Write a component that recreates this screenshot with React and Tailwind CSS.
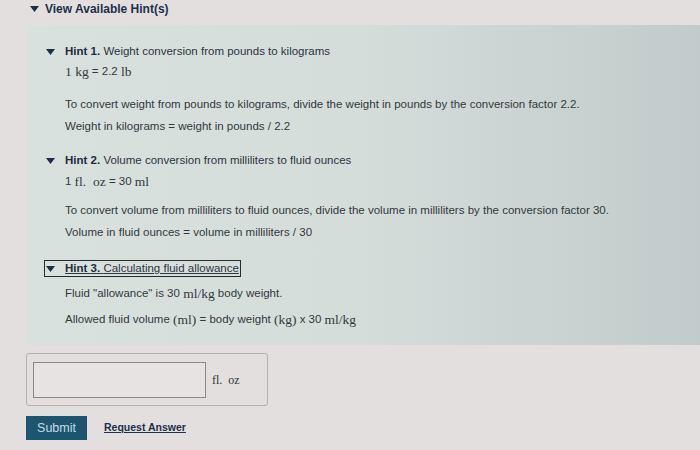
import React from "react";

const sans = { fontFamily: '"Liberation Sans", Arial, sans-serif' };

const Caret = () => (
  <svg width="9" height="6" viewBox="0 0 9 6" className="shrink-0">
    <path d="M0 0 L9 0 L4.5 6 Z" fill="#1d2f45" />
  </svg>
);

const Serif = ({ children }) => (
  <span className="font-['Liberation_Serif',serif] text-[13.5px]">{children}</span>
);

const HintHead = ({ n, title, focused }) => (
  <div
    className={`flex items-center h-[17px] ml-[17px] w-fit pr-[1px] ${
      focused ? "border-[1.5px] border-[#2a2a2a]" : "border-[1.5px] border-transparent"
    }`}>
    <span className="ml-[1px] w-[19px] flex">
      <Caret />
    </span>
    <span className={`text-[11.5px] text-[#2d3440] ${focused ? "underline" : ""}`}>
      <b className="text-[#1d2b3c]">Hint {n}.</b> {title}
    </span>
  </div>
);

const Line = ({ children, className = "" }) => (
  <div className={`h-[22px] flex items-center pl-[38px] text-[11.5px] text-[#33383d] ${className}`}>
    {children}
  </div>
);

export default function App() {
  return (
    <div
      style={sans}
      className="w-[700px] h-[450px] overflow-hidden bg-[#e4dfdf] text-[#333]">
      <div className="flex items-center h-[18px] pl-[30px] gap-[6px]">
        <Caret />
        <span className="font-bold text-[12px] text-[#1d2f4a]">
          View Available Hint(s)
        </span>
      </div>

      <div className="ml-[27px] mt-[7px] h-[320px] pt-[18px] bg-linear-to-r from-[#d9e1df] via-[#d5dddb] to-[#c2cbcb]">
        <HintHead n={1} title="Weight conversion from pounds to kilograms" />
        <Line className="mt-[1px]">
          <Serif>1 kg</Serif>&nbsp;= 2.2&nbsp;<Serif>lb</Serif>
        </Line>
        <Line className="mt-[11px]">
          To convert weight from pounds to kilograms, divide the weight in pounds by the conversion factor 2.2.
        </Line>
        <Line>Weight in kilograms = weight in pounds / 2.2</Line>

        <div className="mt-[14px]">
          <HintHead n={2} title="Volume conversion from milliliters to fluid ounces" />
        </div>
        <Line className="mt-[2px]">
          1&nbsp;<Serif>fl.&nbsp; oz</Serif>&nbsp;= 30&nbsp;<Serif>ml</Serif>
        </Line>
        <Line className="mt-[7px]">
          To convert volume from milliliters to fluid ounces, divide the volume in milliliters by the conversion factor 30.
        </Line>
        <Line>Volume in fluid ounces = volume in milliliters / 30</Line>

        <div className="mt-[16px]">
          <HintHead n={3} title="Calculating fluid allowance" focused />
        </div>
        <Line className="mt-[6px]">
          Fluid "allowance" is 30&nbsp;<Serif>ml/kg</Serif>&nbsp;body weight.
        </Line>
        <Line className="mt-[4px]">
          Allowed fluid volume&nbsp;<Serif>(ml)</Serif>&nbsp;= body weight&nbsp;<Serif>(kg)</Serif>&nbsp;x 30&nbsp;<Serif>ml/kg</Serif>
        </Line>
      </div>

      <div className="ml-[26px] mt-[8px] w-[242px] h-[53px] border border-[#b3b0b0] rounded-[3px] flex items-center pl-[6px]">
        <div className="w-[173px] h-[36px] border border-[#8a8888] bg-[#e7e3e3]" />
        <span className="ml-[6px] font-['Liberation_Serif',serif] text-[12px] text-[#333]">
          fl.&nbsp; oz
        </span>
      </div>

      <div className="flex items-center mt-[10px] ml-[26px]">
        <button className="w-[61px] h-[24px] bg-[#1c5570] text-[#c9d9e2] text-[12.5px]">
          Submit
        </button>
        <span className="ml-[17px] text-[10.5px] font-bold underline text-[#1e3049]">
          Request Answer
        </span>
      </div>
    </div>
  );
}
